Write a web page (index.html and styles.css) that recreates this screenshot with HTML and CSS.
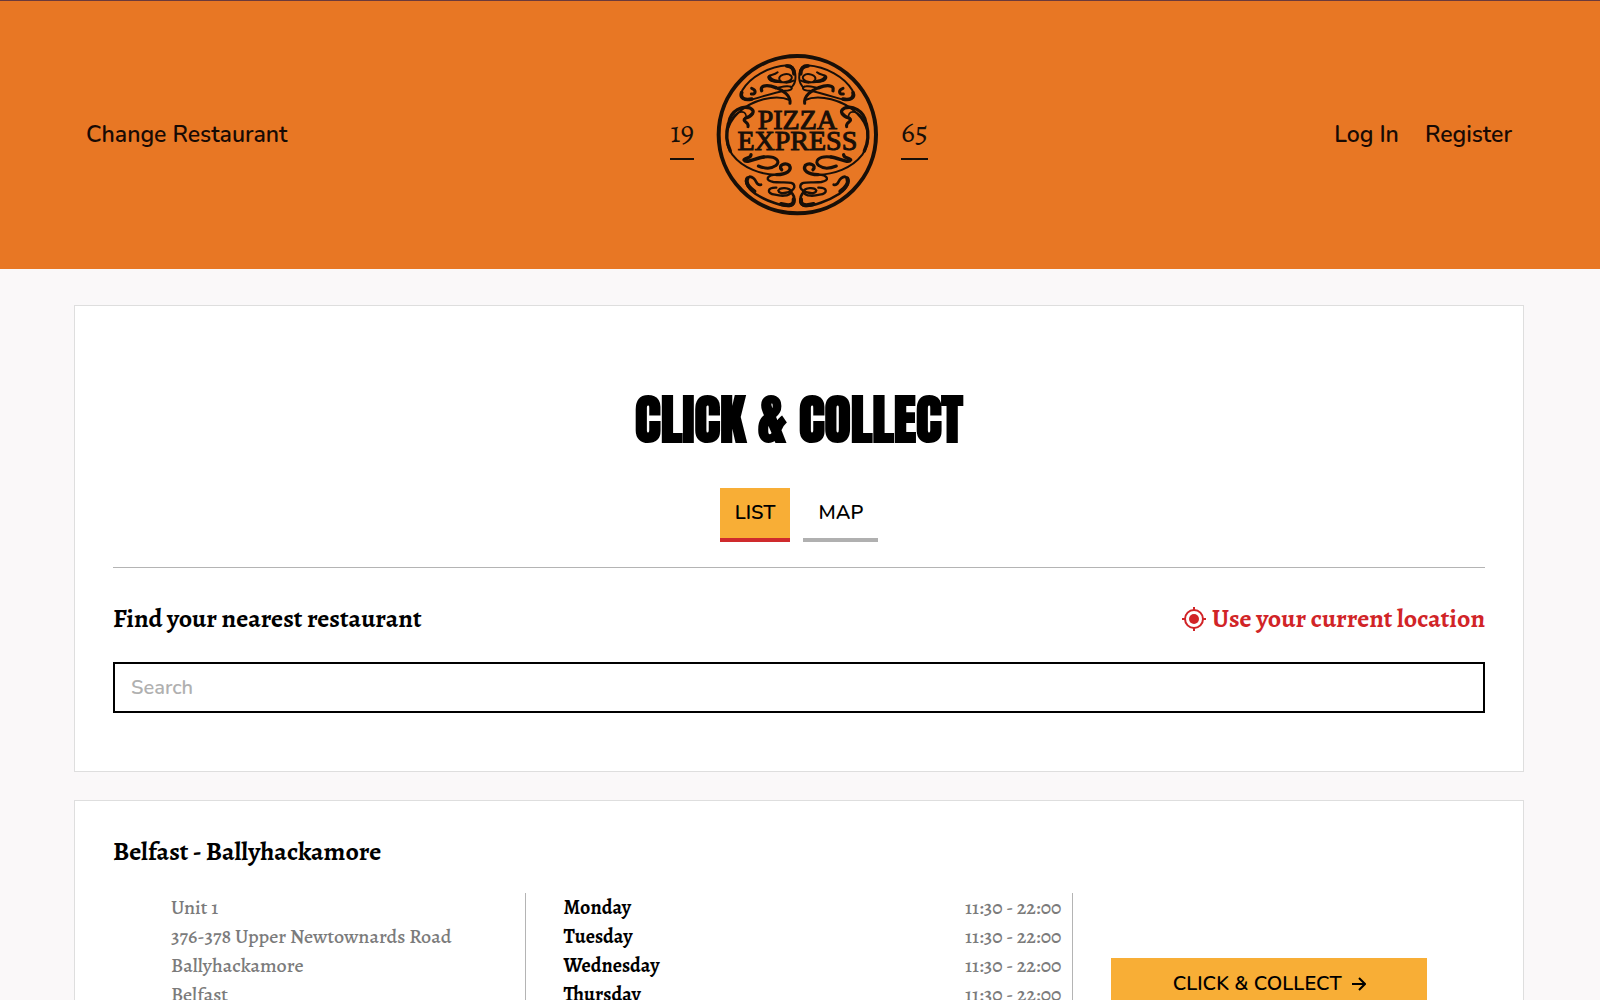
FILE: index.html
```html
<!DOCTYPE html>
<html lang="en">
<head>
<meta charset="utf-8">
<meta name="viewport" content="width=device-width, initial-scale=1">
<title>Click &amp; Collect</title>
<link rel="stylesheet" href="styles.css">
</head>
<body>
<header class="header">
  <nav class="nav"><a href="#">Change Restaurant</a></nav>
  <a class="brand" href="#">
    <span class="year">19</span>
    <svg class="logo" viewBox="-10 -10 495 495" role="img" aria-label="Pizza Express">
      <defs>
        <g id="vines" fill="none" stroke="#180f08" stroke-width="6" stroke-linecap="round">
          <path d="M214 134C170 115 100 135 60 172C18 212 16 262 42 298C74 340 130 358 175 358"/>
          <path stroke-width="10" d="M30 205C22 235 24 262 36 287"/>
          <path d="M222 93C236 78 236 30 208 30C150 34 95 65 72 105C60 130 82 140 110 130C150 118 175 110 200 106C224 106 226 94 210 93C196 91 185 97 172 98"/>
          <path stroke-width="11" d="M70 112C64 128 80 136 100 131M205 32C222 32 227 42 227 56"/>
          <path stroke-width="9" d="M100 99C114 104 114 118 99 116"/>
          <path stroke-width="10" d="M130 106C124 88 150 88 172 97"/>
          <path stroke-width="9" d="M172 97C195 104 218 122 215 144"/>
          <path stroke-width="6" d="M178 51C166 62 148 56 150 67C154 79 170 80 188 81C215 81 226 70 218 61C206 50 180 60 183 72C188 85 212 84 226 76"/>
          <path stroke-width="10" d="M153 65C158 76 168 77 178 78"/>
          <path stroke-width="10" d="M32 200C38 165 72 150 95 158C115 168 100 182 82 188"/>
          <path stroke-width="9" d="M82 188C66 198 94 200 89 214"/>
          <path stroke-width="5" d="M38 195C50 168 80 162 83 180"/>
          <path stroke-width="10" d="M98 298C98 310 78 306 77 314C84 326 112 308 136 305"/>
          <path stroke-width="9" d="M136 305C175 300 188 320 172 331C155 344 135 338 120 332"/>
          <path stroke-width="10" d="M190 343C178 330 200 320 213 330C222 345 205 358 175 358"/>
          <path stroke-width="7" d="M175 358C142 360 140 376 165 380C195 384 231 374 228 396C222 412 182 420 180 406C184 395 214 395 220 410C212 425 185 422 170 418C142 414 148 396 174 397"/>
          <path stroke-width="8" d="M128 388C110 394 118 366 94 364C74 370 84 395 112 416C146 438 190 452 214 452C232 448 230 425 222 415"/>
          <path stroke-width="12" d="M87 370C81 383 94 398 108 408M188 446C218 454 228 448 226 432"/>
        </g>
      </defs>
      <circle cx="237" cy="238" r="236" fill="none" stroke="#180f08" stroke-width="12"/>
      <use href="#vines"/>
      <use href="#vines" transform="translate(474 0) scale(-1 1)"/>
      <text class="logo-text" x="237" y="222">PIZZA</text>
      <text class="logo-text" x="237" y="283">EXPRESS</text>
    </svg>
    <span class="year">65</span>
  </a>
  <nav class="nav nav-end"><a href="#">Log In</a><a href="#">Register</a></nav>
</header>
<main class="main">
  <section class="card finder">
    <h1 class="title">CLICK &amp; COLLECT</h1>
    <div class="tabs">
      <button class="tab tab-active" type="button">LIST</button>
      <button class="tab" type="button">MAP</button>
    </div>
    <div class="finder-head">
      <label class="subtitle" for="search">Find your nearest restaurant</label>
      <a class="locate" href="#">
        <svg class="locate-icon" viewBox="0 0 24 24" fill="none" stroke="currentColor" stroke-width="2" aria-hidden="true"><circle cx="12" cy="12" r="9"/><circle cx="12" cy="12" r="5" fill="currentColor" stroke="none"/><path d="M12 0v4M12 20v4M0 12h4M20 12h4"/></svg>
        <span>Use your current location</span>
      </a>
    </div>
    <input class="search" id="search" type="text" placeholder="Search">
  </section>
  <section class="card restaurant">
    <h2 class="subtitle">Belfast - Ballyhackamore</h2>
    <div class="details">
      <address class="address">Unit 1<br>376-378 Upper Newtownards Road<br>Ballyhackamore<br>Belfast</address>
      <div class="hours">
        <table class="hours-table">
          <tr><th scope="row">Monday</th><td>11:30 - 22:00</td></tr>
          <tr><th scope="row">Tuesday</th><td>11:30 - 22:00</td></tr>
          <tr><th scope="row">Wednesday</th><td>11:30 - 22:00</td></tr>
          <tr><th scope="row">Thursday</th><td>11:30 - 22:00</td></tr>
        </table>
      </div>
      <div class="action">
        <button class="collect" type="button">CLICK &amp; COLLECT
          <svg class="arrow" viewBox="0 0 14 14" fill="none" stroke="currentColor" stroke-width="2" aria-hidden="true"><path d="M0 7h13M7 1l6 6-6 6"/></svg>
        </button>
      </div>
    </div>
  </section>
</main>
</body>
</html>
```
FILE: styles.css
```css
* { box-sizing: border-box; }
body {
  margin: 0;
  background: #faf8f9;
  color: #000;
  font-family: Nunito, Lato, sans-serif;
}
a { color: inherit; text-decoration: none; }
button, input { font-family: inherit; color: inherit; }
.header {
  display: grid;
  grid-template-columns: 1fr auto 1fr;
  align-items: center;
  padding: 51px 88px 52px 86px;
  border-top: 1px solid #6b3a3c;
  background: #e87724;
}
.nav {
  display: flex;
  gap: 26px;
  font-size: 23px;
  font-weight: 600;
  line-height: 32px;
  color: #180a04;
}
.nav-end { justify-content: flex-end; }
.brand { display: flex; align-items: center; gap: 21px; }
.logo { display: block; width: 165px; height: 165px; }
.logo-text {
  font-family: "Liberation Serif", serif;
  font-size: 84px;
  fill: #180f08;
  stroke: #180f08;
  stroke-width: 3px;
  text-anchor: middle;
}
.year {
  padding-bottom: 4px;
  border-bottom: 2px solid #180f08;
  font-family: Alegreya, "Liberation Serif", serif;
  font-size: 30px;
  line-height: 44px;
  color: #180f08;
}
.main {
  display: grid;
  gap: 28px;
  padding: 36px 76px 36px 74px;
}
.card {
  padding: 0 38px;
  border: 1px solid #dedede;
  background: #fff;
}
.finder { padding-bottom: 58px; }
.title {
  margin: 76px 0 32px;
  font-family: Anton, "Liberation Sans Narrow", sans-serif;
  font-size: 54px;
  font-weight: 400;
  line-height: 74px;
  text-align: center;
  -webkit-text-stroke: 2px #000;
}
.tabs {
  display: flex;
  justify-content: center;
  gap: 13px;
  padding-bottom: 25px;
  border-bottom: 1px solid #b4b4b4;
}
.tab {
  padding: 10px 15px;
  border: 0;
  border-bottom: 4px solid #b0b0b0;
  background: #fff;
  font-size: 20px;
  font-weight: 600;
  line-height: 30px;
}
.tab-active { border-color: #cf2a2d; background: #f8ae36; }
.finder-head {
  display: flex;
  justify-content: space-between;
  padding: 34px 0 26px;
}
.subtitle, .locate {
  font-family: Alegreya, "Liberation Serif", serif;
  font-size: 26px;
  font-weight: 600;
  line-height: 34px;
}
.locate { display: flex; align-items: center; gap: 6px; color: #d12427; }
.locate-icon { width: 24px; height: 24px; }
.search {
  display: block;
  width: 100%;
  height: 51px;
  padding: 0 16px;
  border: 2px solid #000;
  border-radius: 0;
  background: #fff;
  font-size: 20px;
  font-weight: 600;
  outline: 0;
}
.search::placeholder { color: #b0b0b0; opacity: 1; }
.restaurant { padding-top: 34px; }
.restaurant .subtitle { margin: 0 0 24px; }
.details {
  display: grid;
  grid-template-columns: 3fr 4fr 3fr;
  font-family: Alegreya, "Liberation Serif", serif;
  font-size: 20px;
  font-weight: 500;
  line-height: 29px;
}
.address { padding-left: 58px; font-style: normal; color: #7b7b7b; }
.hours {
  padding: 0 11px 0 38px;
  border: solid #b4b4b4;
  border-width: 0 1px;
}
.hours-table { width: 100%; border-collapse: collapse; }
.hours-table th, .hours-table td { padding: 0; }
.hours-table th { font-weight: 700; text-align: left; }
.hours-table td { text-align: right; color: #7b7b7b; }
.action { padding: 65px 58px 0 38px; }
.collect {
  display: flex;
  align-items: center;
  justify-content: center;
  gap: 10px;
  width: 100%;
  height: 51px;
  border: 0;
  background: #f8ae36;
  font-family: Nunito, Lato, sans-serif;
  font-size: 20px;
  font-weight: 600;
}
.arrow { width: 14px; height: 14px; }
```
